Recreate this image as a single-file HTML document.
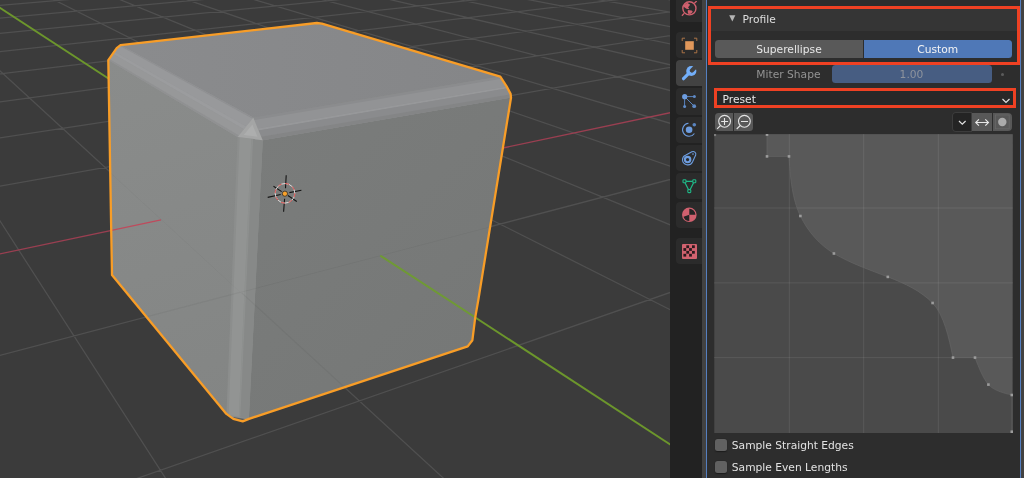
<!DOCTYPE html>
<html><head><meta charset="utf-8"><title>Blender Bevel Profile</title>
<style>
html,body{margin:0;padding:0}
body{width:1024px;height:478px;overflow:hidden;background:#3b3b3b;position:relative;font-family:"DejaVu Sans","Liberation Sans",sans-serif;font-size:10.7px;color:#e2e2e2}
.vp{position:absolute;left:0;top:0;background:#3b3b3b}
.abs{position:absolute}
.col{left:670px;top:0;width:32px;height:478px;background:#222}
.strip{left:702px;top:0;width:322px;height:478px;background:#424242}
.mod{left:706px;top:0;width:315px;height:478px;background:#2d2d2d;border-left:1.4px solid #557fc0;border-right:1.2px solid #557fc0;box-sizing:border-box}
.tab{left:676px;width:26px;height:26.3px;background:#2b2b2b;border-radius:4px 0 0 4px}
.tab.act{background:#424242;width:27px}
.tab svg{position:absolute;left:4.5px;top:5px}
.hdr{left:708px;top:6px;width:312px;height:24.5px;background:#353535}
.red{border:3px solid #ef4123;box-sizing:border-box}
.btn{height:18.3px;line-height:20.3px;text-align:center;white-space:nowrap}
.t{white-space:nowrap;line-height:12px;will-change:opacity}
.btn span{will-change:opacity;display:inline-block}
.cw{position:absolute}
.chk{left:715px;width:12.3px;height:12.2px;background:#616161;box-shadow:0 .5px 1px #1c1c1c;border-radius:2.5px}
</style></head><body>
<svg class="vp" width="670" height="478" viewBox="0 0 670 478">
<defs><clipPath id="cc"><polygon points="108.3,60.1 116.7,48.2 120.5,45.1 316.9,23 321.9,23.6 500.3,76.6 506.6,86.4 510.6,93.9 511,97.7 478.3,300 475.2,317.6 472.4,340.2 467.7,346.4 249,418.9 242.7,421.4 233.3,418.9 226.4,413.9 112,275.1"/></clipPath><clipPath id="cb"><polygon points="100,163 161.5,219.4 240,292 500,224 520,222 520,478 100,478"/></clipPath>
<linearGradient id="gL" gradientUnits="userSpaceOnUse" x1="110" y1="60" x2="235" y2="410"><stop offset="0" stop-color="#8a8c8b"/><stop offset="1" stop-color="#838584"/></linearGradient>
<linearGradient id="gR" gradientUnits="userSpaceOnUse" x1="262" y1="140" x2="470" y2="345"><stop offset="0" stop-color="#7a7c7b"/><stop offset="1" stop-color="#767877"/></linearGradient>
<linearGradient id="gT" gradientUnits="userSpaceOnUse" x1="140" y1="60" x2="480" y2="70"><stop offset="0" stop-color="#8a8b8d"/><stop offset="1" stop-color="#858688"/></linearGradient>
</defs>
<path d="M-7324.9 6267.2L-248.4 -135.2M-4535.8 6244.5L-243.6 -135.2M-1746.6 6221.7L-238.9 -135.3M1042.6 6198.9L-234.1 -135.4M3831.8 6176.1L-229.3 -135.4M6621 6153.3L-224.6 -135.5M12199.3 6107.8L-215.2 -135.6M14988.5 6085L-210.6 -135.7M17777.7 6062.2L-205.9 -135.7M20566.8 6039.4L-201.3 -135.8M23356 6016.6L-196.7 -135.9M26145.2 5993.8L-192.1 -135.9M28934.4 5971.1L-187.5 -136M31723.6 5948.3L-183 -136M34512.7 5925.5L-178.5 -136.1M37301.9 5902.7L-174 -136.2M40091.1 5879.9L-169.5 -136.2M42880.3 5857.1L-165 -136.3M45669.5 5834.4L-160.6 -136.3M48458.6 5811.6L-156.1 -136.4M51247.8 5788.8L-151.7 -136.4M54037 5766L-147.3 -136.5M56826.2 5743.2L-142.9 -136.6M59615.4 5720.4L-138.6 -136.6M62404.5 5697.6L-134.2 -136.7M65193.7 5674.9L-129.9 -136.7M67982.9 5652.1L-125.6 -136.8M70772.1 5629.3L-121.3 -136.8M73561.2 5606.5L-117 -136.9M76350.4 5583.7L-112.8 -137M79139.6 5560.9L-108.5 -137M81928.8 5538.2L-104.3 -137.1M84718 5515.4L-100.1 -137.1M87507.1 5492.6L-95.9 -137.2M90296.3 5469.8L-91.7 -137.2M93085.5 5447L-87.6 -137.3M95874.7 5424.2L-83.5 -137.3M98663.9 5401.5L-79.3 -137.4M101453 5378.7L-75.2 -137.4M104242.2 5355.9L-71.1 -137.5M107031.4 5333.1L-67.1 -137.6M109820.6 5310.3L-63 -137.6M112609.8 5287.5L-59 -137.7M115398.9 5264.8L-55 -137.7M118188.1 5242L-50.9 -137.8M120977.3 5219.2L-47 -137.8M123766.5 5196.4L-43 -137.9M126555.7 5173.6L-39 -137.9M129344.8 5150.8L-35.1 -138M132134 5128L-31.1 -138M134923.2 5105.3L-27.2 -138.1M137712.4 5082.5L-23.3 -138.1M140501.5 5059.7L-19.4 -138.2M143290.7 5036.9L-15.6 -138.2M146079.9 5014.1L-11.7 -138.3M148869.1 4991.3L-7.9 -138.3M151658.3 4968.6L-4.1 -138.4M154447.4 4945.8L-0.2 -138.4M157236.6 4923L3.5 -138.5M160025.8 4900.2L7.3 -138.5M162815 4877.4L11.1 -138.6M165604.2 4854.6L14.8 -138.6M168393.3 4831.9L18.6 -138.7M171182.5 4809.1L22.3 -138.7M173971.7 4786.3L26 -138.8M17109.2 14137L1997 -147.7M2741.3 14254.3L1980.3 -147.7M-11626.6 14371.7L1963.8 -147.7M-25994.5 14489.1L1947.6 -147.6M-40362.4 14606.4L1931.6 -147.6M-54730.4 14723.8L1915.9 -147.6M-83466.2 14958.5L1885 -147.6M-97834.1 15075.9L1870 -147.6M-112202 15193.3L1855.1 -147.6M-126569.9 15310.6L1840.4 -147.6M-140937.8 15428L1826 -147.6M-155305.7 15545.4L1811.7 -147.5M-169673.6 15662.7L1797.6 -147.5M-184041.5 15780.1L1783.8 -147.5M-198409.4 15897.5L1770.1 -147.5M-212777.4 16014.8L1756.6 -147.5M-227145.3 16132.2L1743.3 -147.5M-241513.2 16249.6L1730.1 -147.5M-255881.1 16366.9L1717.2 -147.5M-270249 16484.3L1704.4 -147.5M-284616.9 16601.7L1691.8 -147.5M-298984.8 16719L1679.3 -147.5M-313352.7 16836.4L1667 -147.5M-327720.6 16953.8L1654.8 -147.4M-342088.5 17071.1L1642.8 -147.4M-356456.4 17188.5L1631 -147.4M-370824.4 17305.9L1619.3 -147.4M-385192.3 17423.2L1607.7 -147.4M-399560.2 17540.6L1596.3 -147.4M-413928.1 17658L1585.1 -147.4M-428296 17775.3L1573.9 -147.4M-442663.9 17892.7L1562.9 -147.4M-457031.8 18010.1L1552.1 -147.4M-471399.7 18127.4L1541.4 -147.4M-485767.6 18244.8L1530.7 -147.4M-500135.5 18362.2L1520.3 -147.4M-514503.4 18479.5L1509.9 -147.4M-528871.3 18596.9L1499.7 -147.3M-543239.3 18714.3L1489.6 -147.3M-557607.2 18831.6L1479.6 -147.3M-571975.1 18949L1469.7 -147.3M-586343 19066.4L1459.9 -147.3M-600710.9 19183.7L1450.3 -147.3M-615078.8 19301.1L1440.7 -147.3M-629446.7 19418.5L1431.3 -147.3M-643814.6 19535.8L1421.9 -147.3M-658182.5 19653.2L1412.7 -147.3M-672550.4 19770.6L1403.6 -147.3M-686918.3 19887.9L1394.6 -147.3M-701286.3 20005.3L1385.6 -147.3M-715654.2 20122.7L1376.8 -147.3M-730022.1 20240.1L1368.1 -147.3M-744390 20357.4L1359.4 -147.3M-758757.9 20474.8L1350.9 -147.2M-773125.8 20592.2L1342.4 -147.2M-787493.7 20709.5L1334 -147.2M-801861.6 20826.9L1325.8 -147.2M-816229.5 20944.3L1317.6 -147.2M-830597.4 21061.6L1309.5 -147.2M-844965.3 21179L1301.4 -147.2M-859333.3 21296.4L1293.5 -147.2M-873701.2 21413.7L1285.6 -147.2M-888069.1 21531.1L1277.9 -147.2M-902437 21648.5L1270.2 -147.2M-916804.9 21765.8L1262.5 -147.2M-931172.8 21883.2L1255 -147.2M-945540.7 22000.6L1247.5 -147.2M-959908.6 22117.9L1240.1 -147.2M-974276.5 22235.3L1232.8 -147.2M-988644.4 22352.7L1225.6 -147.2M-1003012.3 22470L1218.4 -147.2M-1017380.2 22587.4L1211.3 -147.2M-1031748.2 22704.8L1204.2 -147.1M-1046116.1 22822.1L1197.3 -147.1M-1060484 22939.5L1190.4 -147.1M-1074851.9 23056.9L1183.5 -147.1M-1089219.8 23174.2L1176.8 -147.1M-1103587.7 23291.6L1170 -147.1M-1117955.6 23409L1163.4 -147.1M-1132323.5 23526.3L1156.8 -147.1M-1146691.4 23643.7L1150.3 -147.1M-1161059.3 23761.1L1143.8 -147.1M-1175427.2 23878.4L1137.4 -147.1M-1189795.2 23995.8L1131.1 -147.1M-1204163.1 24113.2L1124.8 -147.1" stroke="#505050" stroke-width="1.25" fill="none"/>
<path d="M-10 256L680 110.6" stroke="#9a3f51" stroke-width="1.4" fill="none"/>
<path d="M-10 1.3L680 450.8" stroke="#6c962c" stroke-width="1.9" fill="none"/>
<polygon points="108.3,60.1 116.7,48.2 120.5,45.1 316.9,23 321.9,23.6 500.3,76.6 506.6,86.4 510.6,93.9 511,97.7 478.3,300 475.2,317.6 472.4,340.2 467.7,346.4 249,418.9 242.7,421.4 233.3,418.9 226.4,413.9 112,275.1" fill="url(#gL)"/>
<polygon points="120.5,45.1 316.9,23 321.9,23.6 500.3,76.6 253.3,117.6" fill="url(#gT)"/>
<polygon points="262.7,140.2 511,97.7 478.3,300 475.2,317.6 472.4,340.2 467.7,346.4 249,418.9" fill="url(#gR)"/>
<polygon points="108.3,60.1 116.7,48.2 120.5,45.1 253.3,117.6 237.6,137.1" fill="#949597"/><polygon points="120.5,45.1 253.3,117.6 252.4,118.8 119.8,46" fill="#909193"/><polygon points="119.8,46 252.4,118.8 246.2,126.4 115,51.9" fill="#98999b"/><polygon points="115,51.9 246.2,126.4 243.9,129.3 113.2,54.1" fill="#9b9c9e"/><polygon points="113.2,54.1 243.9,129.3 238.9,135.5 109.3,58.9" fill="#979899"/><polygon points="109.3,58.9 238.9,135.5 237.6,137.1 108.3,60.1" fill="#909192"/>
<polygon points="253.3,117.6 500.3,76.6 506.6,86.4 510.6,93.9 511,97.7 262.7,140.2" fill="#8c8d8f"/><polygon points="253.3,117.6 500.3,76.6 501.4,78.7 254.2,119.9" fill="#8b8c8e"/><polygon points="254.2,119.9 501.4,78.7 505.4,86.7 257.8,128.4" fill="#929395"/><polygon points="257.8,128.4 505.4,86.7 506.4,88.6 258.7,130.5" fill="#97989a"/><polygon points="258.7,130.5 506.4,88.6 509.4,94.5 261.3,136.8" fill="#8a8b8d"/><polygon points="261.3,136.8 509.4,94.5 511,97.7 262.7,140.2" fill="#848586"/>
<polygon points="237.6,137.1 262.7,140.2 248.8,418.6 242.7,421.4 233.3,418.9 226.4,413.9" fill="#8b8d8c"/><polygon points="237.6,137.1 226.8,414.5 228.6,414.8 239.6,137.3" fill="#8c8e8d"/><polygon points="239.6,137.3 228.6,414.8 238.9,416.8 251.4,138.8" fill="#929493"/><polygon points="251.4,138.8 238.9,416.8 240.4,417 253.2,139" fill="#8e908f"/><polygon points="253.2,139 240.4,417 248.8,418.6 262.7,140.2" fill="#878988"/>
<polygon points="253.3,117.6 237.6,137.1 262.7,140.2" fill="#a4a5a5"/><polygon points="252.4,124.4 243.7,135.1 257.5,136.8" fill="#adaeae"/>
<polygon points="233,417 248,419.5 243,421 236,419.5" fill="#5c5d5d"/>
<g clip-path="url(#cc)"><g clip-path="url(#cb)" opacity=".055"><path d="M-7324.9 6267.2L-248.4 -135.2M-4535.8 6244.5L-243.6 -135.2M-1746.6 6221.7L-238.9 -135.3M1042.6 6198.9L-234.1 -135.4M3831.8 6176.1L-229.3 -135.4M6621 6153.3L-224.6 -135.5M12199.3 6107.8L-215.2 -135.6M14988.5 6085L-210.6 -135.7M17777.7 6062.2L-205.9 -135.7M20566.8 6039.4L-201.3 -135.8M23356 6016.6L-196.7 -135.9M26145.2 5993.8L-192.1 -135.9M28934.4 5971.1L-187.5 -136M31723.6 5948.3L-183 -136M34512.7 5925.5L-178.5 -136.1M37301.9 5902.7L-174 -136.2M40091.1 5879.9L-169.5 -136.2M42880.3 5857.1L-165 -136.3M45669.5 5834.4L-160.6 -136.3M48458.6 5811.6L-156.1 -136.4M51247.8 5788.8L-151.7 -136.4M54037 5766L-147.3 -136.5M56826.2 5743.2L-142.9 -136.6M59615.4 5720.4L-138.6 -136.6M62404.5 5697.6L-134.2 -136.7M65193.7 5674.9L-129.9 -136.7M67982.9 5652.1L-125.6 -136.8M70772.1 5629.3L-121.3 -136.8M73561.2 5606.5L-117 -136.9M76350.4 5583.7L-112.8 -137M79139.6 5560.9L-108.5 -137M81928.8 5538.2L-104.3 -137.1M84718 5515.4L-100.1 -137.1M87507.1 5492.6L-95.9 -137.2M90296.3 5469.8L-91.7 -137.2M93085.5 5447L-87.6 -137.3M95874.7 5424.2L-83.5 -137.3M98663.9 5401.5L-79.3 -137.4M101453 5378.7L-75.2 -137.4M104242.2 5355.9L-71.1 -137.5M107031.4 5333.1L-67.1 -137.6M109820.6 5310.3L-63 -137.6M112609.8 5287.5L-59 -137.7M115398.9 5264.8L-55 -137.7M118188.1 5242L-50.9 -137.8M120977.3 5219.2L-47 -137.8M123766.5 5196.4L-43 -137.9M126555.7 5173.6L-39 -137.9M129344.8 5150.8L-35.1 -138M132134 5128L-31.1 -138M134923.2 5105.3L-27.2 -138.1M137712.4 5082.5L-23.3 -138.1M140501.5 5059.7L-19.4 -138.2M143290.7 5036.9L-15.6 -138.2M146079.9 5014.1L-11.7 -138.3M148869.1 4991.3L-7.9 -138.3M151658.3 4968.6L-4.1 -138.4M154447.4 4945.8L-0.2 -138.4M157236.6 4923L3.5 -138.5M160025.8 4900.2L7.3 -138.5M162815 4877.4L11.1 -138.6M165604.2 4854.6L14.8 -138.6M168393.3 4831.9L18.6 -138.7M171182.5 4809.1L22.3 -138.7M173971.7 4786.3L26 -138.8M17109.2 14137L1997 -147.7M2741.3 14254.3L1980.3 -147.7M-11626.6 14371.7L1963.8 -147.7M-25994.5 14489.1L1947.6 -147.6M-40362.4 14606.4L1931.6 -147.6M-54730.4 14723.8L1915.9 -147.6M-83466.2 14958.5L1885 -147.6M-97834.1 15075.9L1870 -147.6M-112202 15193.3L1855.1 -147.6M-126569.9 15310.6L1840.4 -147.6M-140937.8 15428L1826 -147.6M-155305.7 15545.4L1811.7 -147.5M-169673.6 15662.7L1797.6 -147.5M-184041.5 15780.1L1783.8 -147.5M-198409.4 15897.5L1770.1 -147.5M-212777.4 16014.8L1756.6 -147.5M-227145.3 16132.2L1743.3 -147.5M-241513.2 16249.6L1730.1 -147.5M-255881.1 16366.9L1717.2 -147.5M-270249 16484.3L1704.4 -147.5M-284616.9 16601.7L1691.8 -147.5M-298984.8 16719L1679.3 -147.5M-313352.7 16836.4L1667 -147.5M-327720.6 16953.8L1654.8 -147.4M-342088.5 17071.1L1642.8 -147.4M-356456.4 17188.5L1631 -147.4M-370824.4 17305.9L1619.3 -147.4M-385192.3 17423.2L1607.7 -147.4M-399560.2 17540.6L1596.3 -147.4M-413928.1 17658L1585.1 -147.4M-428296 17775.3L1573.9 -147.4M-442663.9 17892.7L1562.9 -147.4M-457031.8 18010.1L1552.1 -147.4M-471399.7 18127.4L1541.4 -147.4M-485767.6 18244.8L1530.7 -147.4M-500135.5 18362.2L1520.3 -147.4M-514503.4 18479.5L1509.9 -147.4M-528871.3 18596.9L1499.7 -147.3M-543239.3 18714.3L1489.6 -147.3M-557607.2 18831.6L1479.6 -147.3M-571975.1 18949L1469.7 -147.3M-586343 19066.4L1459.9 -147.3M-600710.9 19183.7L1450.3 -147.3M-615078.8 19301.1L1440.7 -147.3M-629446.7 19418.5L1431.3 -147.3M-643814.6 19535.8L1421.9 -147.3M-658182.5 19653.2L1412.7 -147.3M-672550.4 19770.6L1403.6 -147.3M-686918.3 19887.9L1394.6 -147.3M-701286.3 20005.3L1385.6 -147.3M-715654.2 20122.7L1376.8 -147.3M-730022.1 20240.1L1368.1 -147.3M-744390 20357.4L1359.4 -147.3M-758757.9 20474.8L1350.9 -147.2M-773125.8 20592.2L1342.4 -147.2M-787493.7 20709.5L1334 -147.2M-801861.6 20826.9L1325.8 -147.2M-816229.5 20944.3L1317.6 -147.2M-830597.4 21061.6L1309.5 -147.2M-844965.3 21179L1301.4 -147.2M-859333.3 21296.4L1293.5 -147.2M-873701.2 21413.7L1285.6 -147.2M-888069.1 21531.1L1277.9 -147.2M-902437 21648.5L1270.2 -147.2M-916804.9 21765.8L1262.5 -147.2M-931172.8 21883.2L1255 -147.2M-945540.7 22000.6L1247.5 -147.2M-959908.6 22117.9L1240.1 -147.2M-974276.5 22235.3L1232.8 -147.2M-988644.4 22352.7L1225.6 -147.2M-1003012.3 22470L1218.4 -147.2M-1017380.2 22587.4L1211.3 -147.2M-1031748.2 22704.8L1204.2 -147.1M-1046116.1 22822.1L1197.3 -147.1M-1060484 22939.5L1190.4 -147.1M-1074851.9 23056.9L1183.5 -147.1M-1089219.8 23174.2L1176.8 -147.1M-1103587.7 23291.6L1170 -147.1M-1117955.6 23409L1163.4 -147.1M-1132323.5 23526.3L1156.8 -147.1M-1146691.4 23643.7L1150.3 -147.1M-1161059.3 23761.1L1143.8 -147.1M-1175427.2 23878.4L1137.4 -147.1M-1189795.2 23995.8L1131.1 -147.1M-1204163.1 24113.2L1124.8 -147.1" stroke="#222" stroke-width="1.2" fill="none"/></g></g>
<g clip-path="url(#cc)"><path d="M0 253.9L161 219.9" stroke="#bf4a5c" stroke-width="1.4"/><path d="M380.3 255.6L680 450.8" stroke="#6f9a34" stroke-width="1.9"/></g>
<polygon points="108.3,60.1 116.7,48.2 120.5,45.1 316.9,23 321.9,23.6 500.3,76.6 506.6,86.4 510.6,93.9 511,97.7 478.3,300 475.2,317.6 472.4,340.2 467.7,346.4 249,418.9 242.7,421.4 233.3,418.9 226.4,413.9 112,275.1" fill="none" stroke="#f89d27" stroke-width="2.3" stroke-linejoin="round"/>
<g stroke="#141414" stroke-width="1.1" fill="none" stroke-linecap="butt">
<path d="M286.2 175.3L285.5 188.3M284.6 198.8L283.6 211.8M273.5 186.3L281.7 191.6M287.9 195.5L296.8 201.5M267.7 197.4L280.7 194.5M289.4 192.6L301.4 190.2"/></g>
<circle cx="285" cy="193.3" r="9.8" fill="none" stroke="#e8e8e8" stroke-width=".9"/>
<circle cx="285" cy="193.3" r="9.8" fill="none" stroke="#dc4a48" stroke-width="1" stroke-dasharray="3.85 3.85"/>
<circle cx="284.9" cy="193.7" r="2.6" fill="#f9a22b" stroke="#2a2a2a" stroke-width=".8"/>
</svg>
<div class="abs col"></div>
<div class="abs strip"></div>
<div class="abs mod"></div>

<div class="abs tab" style="top:-4px"><svg width="17" height="17" viewBox="0 0 17 17"><circle cx="8.4" cy="7.3" r="6.6" fill="none" stroke="#d0606e" stroke-width="1.4"/><path d="M2.5 4.4 6.3 1.7 9.2 3.8 7.1 6.3 8.4 8.3 5.4 7.8 3.3 6.2Z" fill="#d0606e"/><path d="M6.9 9 10.6 9.4 11.8 10.8 9.9 12.8 7.4 13 6.7 11Z" fill="#d0606e"/><path d="M.9 14.7 3.2 12.4M13.4 2.2 15.7 0" stroke="#d0606e" stroke-width="1.3"/></svg></div>

<div class="abs tab" style="top:31.6px"><svg width="17" height="17" viewBox="0 0 17 17"><rect x="4.2" y="4.2" width="8.6" height="8.6" fill="#e0975a"/><path d="M1.2 4V1.2H4M13 1.2h2.8V4M15.8 13v2.8H13M4 15.8H1.2V13" fill="none" stroke="#b87b49" stroke-width=".9"/></svg></div>

<div class="abs tab act" style="top:60px"><svg width="17" height="17" viewBox="0 0 17 17"><defs><mask id="wm"><rect width="17" height="17" fill="#fff"/><path d="M10.9 5.4 17 -.7" stroke="#000" stroke-width="4.2" stroke-linecap="round"/></mask></defs><path d="M2.5 13.7 8 8.2" stroke="#73affa" stroke-width="3.2" stroke-linecap="round"/><circle cx="10.3" cy="6" r="5.1" fill="#73affa" mask="url(#wm)"/></svg></div>

<div class="abs tab" style="top:88.3px"><svg width="17" height="17" viewBox="0 0 17 17"><g stroke="#5a83bd" stroke-width="1"><path d="M3.6 3.6H13.5M3.6 3.6V13.5M3.6 3.6 13 13"/></g><circle cx="3.7" cy="3.7" r="2.6" fill="#6d9de0"/><circle cx="13.4" cy="3.6" r="1.5" fill="#5f8ac6"/><circle cx="3.6" cy="13.4" r="1.5" fill="#5f8ac6"/><circle cx="13.2" cy="13.2" r="1.9" fill="#5f8ac6"/></svg></div>

<div class="abs tab" style="top:117px"><svg width="17" height="17" viewBox="0 0 17 17"><circle cx="8.1" cy="7.8" r="3.3" fill="#6d9de0"/><path d="M7.5 1.3A6.5 6.5 0 1 0 13.4 11.5" fill="none" stroke="#6d9de0" stroke-width="1.1"/><circle cx="13.3" cy="2.7" r="1.8" fill="#5a84bf"/></svg></div>

<div class="abs tab" style="top:145px"><svg width="17" height="17" viewBox="0.4 0.7 17 17"><path d="M1.9 10.5a5 5 0 0 1 3 -4.6l6.4 -3.4a2.7 2.7 0 0 1 3.8 3.2l-3.2 7a5.3 5.3 0 0 1 -10 -2.2z" fill="none" stroke="#6d9de0" stroke-width="1.1"/><circle cx="7" cy="10.3" r="2.7" fill="none" stroke="#6d9de0" stroke-width="2.1"/><circle cx="12.4" cy="4.8" r=".8" fill="#6d9de0"/></svg></div>

<div class="abs tab" style="top:173.2px"><svg width="17" height="17" viewBox="0 0.4 17 17"><path d="M3.3 3.7H13.3L8.3 13.6Z" fill="none" stroke="#1fb887" stroke-width="1.2"/><g fill="#2b2b2b" stroke="#1fb887" stroke-width="1.1"><rect x="2" y="2.2" width="3" height="3" rx=".8"/><rect x="11.8" y="2.2" width="3" height="3" rx=".8"/><rect x="6.8" y="12" width="3" height="3" rx=".8"/></g></svg></div>

<div class="abs tab" style="top:201.5px"><svg width="17" height="17" viewBox="0 0 17 17"><circle cx="8.3" cy="7.8" r="7.3" fill="#d0606e"/><path d="M8.3 7.8V1.7A6.1 6.1 0 0 1 14.4 7.8ZM8.3 7.8V13.9A6.1 6.1 0 0 1 2.5 9.7Z" fill="#252525"/></svg></div>

<div class="abs tab" style="top:238px"><svg width="17" height="17" viewBox="0 0 17 17"><rect x="1" y="1" width="15" height="15" rx="1" fill="#d2626f"/><g fill="#2a1a1d"><rect x="5.3" y="2.3" width="2.8" height="2.8"/><rect x="11" y="2.3" width="2.8" height="2.8"/><rect x="2.4" y="5.1" width="2.8" height="2.8"/><rect x="8.1" y="5.1" width="2.8" height="2.8"/><rect x="5.3" y="7.9" width="2.8" height="2.8"/><rect x="11" y="7.9" width="2.8" height="2.8"/><rect x="2.4" y="10.8" width="2.8" height="2.8"/><rect x="8.1" y="10.8" width="2.8" height="2.8"/></g></svg></div>

<div class="abs hdr"></div>
<svg class="abs" style="left:729px;top:15px" width="7" height="7" viewBox="0 0 7 7"><path d="M.2 .3H6.4L3.3 6.5Z" fill="#b4b4b4"/></svg>
<div class="abs t" style="left:742.5px;top:14px;color:#dedede">Profile</div>
<div class="abs red" style="left:708px;top:6px;width:312px;height:59px"></div>

<div class="abs btn" style="left:715px;top:40px;width:148px;background:#595959;border-radius:3.5px 0 0 3.5px;color:#e6e6e6"><span>Superellipse</span></div>
<div class="abs btn" style="left:863.5px;top:40px;width:148.5px;background:#4f78b7;border-radius:0 3.5px 3.5px 0;color:#f4f4f4"><span>Custom</span></div>

<div class="abs t" style="left:700px;top:69.2px;width:120.5px;text-align:right;color:#939393">Miter Shape</div>
<div class="abs btn" style="left:831.5px;top:65.3px;width:160px;background:#475d82;border-radius:3.5px;color:#8d939d;height:18px;line-height:20px"><span>1.00</span></div>
<div class="abs" style="left:1000.9px;top:72.6px;width:3.6px;height:3.6px;border-radius:50%;background:#5c5c5c"></div>

<div class="abs" style="left:716px;top:90px;width:298px;height:16px;background:#282828;border-radius:2px"></div>
<div class="abs t" style="left:722.5px;top:94px;color:#e6e6e6">Preset</div>
<svg class="abs" style="left:1001px;top:96.5px" width="10" height="8" viewBox="0 0 10 8"><path d="M1.5 2 5 5.4 8.5 2" fill="none" stroke="#e0e0e0" stroke-width="1.2"/></svg>
<div class="abs red" style="left:714px;top:88px;width:301.6px;height:20px;border-width:3px"></div>

<div class="abs" style="left:715px;top:113px;width:18px;height:18px;background:#585858;border-radius:3.5px 0 0 3.5px"></div>
<div class="abs" style="left:734px;top:113px;width:19.3px;height:18px;background:#585858;border-radius:0 3.5px 3.5px 0"></div>
<svg class="abs" style="left:715px;top:113px" width="39" height="19" viewBox="0 0 39 19"><g fill="none" stroke="#e4e4e4" stroke-width="1.1"><circle cx="9.6" cy="8.3" r="5.9"/><path d="M5.5 12.5 2.1 15.9M6.1 8.5h7M9.5 5v7"/><circle cx="29.4" cy="8.3" r="5.9"/><path d="M25.3 12.5 21.7 16M26 8.5h7"/></g></svg>

<div class="abs" style="left:952.4px;top:112px;width:19.8px;height:19.6px;background:#242424;border-radius:4px 0 0 4px;box-shadow:inset 0 0 0 1px #3c3c3c"></div>
<div class="abs" style="left:972.4px;top:113px;width:19.3px;height:18px;background:#585858"></div>
<div class="abs" style="left:993px;top:112.5px;width:19px;height:18.7px;background:#585858;border-radius:0 4px 4px 0"></div>
<svg class="abs" style="left:952px;top:112px" width="61" height="20" viewBox="0 0 61 20"><path d="M7 9 10.3 12.2 13.6 9" fill="none" stroke="#e0e0e0" stroke-width="1.2"/><path d="M23.8 10.5H36.4M26.9 7.3 23.7 10.5 26.9 13.7M33.3 7.3 36.5 10.5 33.3 13.7" fill="none" stroke="#e8e8e8" stroke-width="1.1"/><rect x="43.4" y="3" width="13.8" height="13.8" fill="none" stroke="#686868" stroke-width=".8"/><circle cx="50.3" cy="10" r="4.2" fill="#ababab"/></svg>

<svg class="cw" width="299" height="299" viewBox="0 0 299 299" style="left:714px;top:134px">
<rect x=".3" y=".3" width="298.6" height="298.8" fill="#4a4a4a"/>
<path d="M53 0.3L53 22.4L75 22.4C76.5 51 80 69 86.4 82C94 98 106 111 119.9 119.5C138 130 156 136 173.8 142.9C191 149.5 207 157 218.6 169C230 181 235 204 239 223.6L261 223.6C265 234 269 244 274.4 250.6C280 256.5 289 259 298 261L298 298.5L298.6 .3Z" fill="#595959"/>
<path d="M75.3 0V299M0 74H299" stroke="#fff" stroke-opacity=".085" stroke-width="1"/><path d="M149.7 0V299M0 148.9H299" stroke="#fff" stroke-opacity=".085" stroke-width="1"/><path d="M224.3 0V299M0 223.6H299" stroke="#fff" stroke-opacity=".085" stroke-width="1"/>
<path d="M53 0.3L53 22.4L75 22.4C76.5 51 80 69 86.4 82C94 98 106 111 119.9 119.5C138 130 156 136 173.8 142.9C191 149.5 207 157 218.6 169C230 181 235 204 239 223.6L261 223.6C265 234 269 244 274.4 250.6C280 256.5 289 259 298 261L298 298.5" fill="none" stroke="#686868" stroke-width="1" stroke-opacity=".6"/>
<rect x="51.7" y="-0.7" width="2.6" height="2.6" fill="#9c9c9c"/><rect x="51.7" y="21.1" width="2.6" height="2.6" fill="#9c9c9c"/><rect x="73.7" y="21.1" width="2.6" height="2.6" fill="#9c9c9c"/><rect x="85.1" y="80.7" width="2.6" height="2.6" fill="#9c9c9c"/><rect x="118.6" y="118.2" width="2.6" height="2.6" fill="#9c9c9c"/><rect x="172.5" y="141.6" width="2.6" height="2.6" fill="#9c9c9c"/><rect x="217.3" y="167.7" width="2.6" height="2.6" fill="#9c9c9c"/><rect x="237.7" y="222.3" width="2.6" height="2.6" fill="#9c9c9c"/><rect x="259.7" y="222.3" width="2.6" height="2.6" fill="#9c9c9c"/><rect x="273.1" y="249.3" width="2.6" height="2.6" fill="#9c9c9c"/><rect x="296.5" y="259.7" width="2.6" height="2.6" fill="#9c9c9c"/><rect x="296.5" y="296.4" width="2.6" height="2.6" fill="#9c9c9c"/><rect x="-0.5" y="-0.5" width="2.6" height="2.6" fill="#7c7c7c"/>
</svg>

<div class="abs chk" style="top:439px"></div>
<div class="abs t" style="left:731.8px;top:440px">Sample Straight Edges</div>
<div class="abs chk" style="top:461.3px"></div>
<div class="abs t" style="left:731.8px;top:462px">Sample Even Lengths</div>
</body></html>
